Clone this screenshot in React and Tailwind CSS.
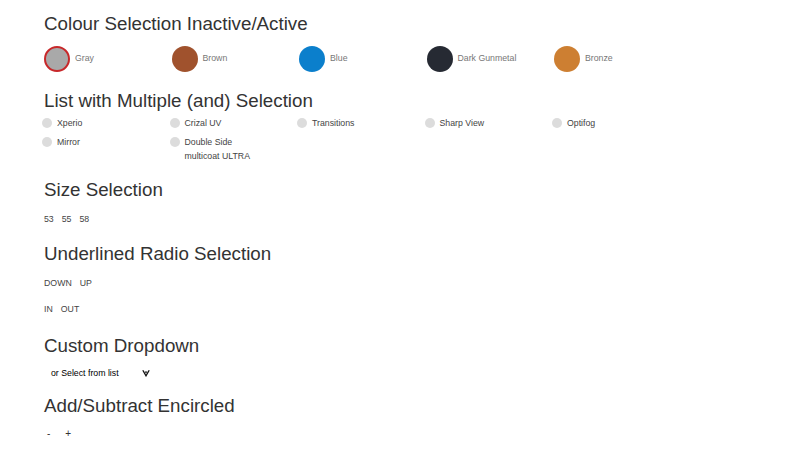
import React from 'react';

const colours = [
  { name: 'Gray', bg: 'bg-[#a9a9a9]', active: true },
  { name: 'Brown', bg: 'bg-[#a0522d]' },
  { name: 'Blue', bg: 'bg-[#0b7fcc]' },
  { name: 'Dark Gunmetal', bg: 'bg-[#262a33]' },
  { name: 'Bronze', bg: 'bg-[#cd7f32]' },
];

const options = ['Xperio', 'Crizal UV', 'Transitions', 'Sharp View', 'Optifog', 'Mirror', 'Double Side multicoat ULTRA'];

const Heading = ({ children, className = '' }) => (
  <h2 className={`text-[18.75px] leading-6 text-[#333] ${className}`}>{children}</h2>
);

const App = () => {
  return (
    <div className="min-h-[450px] bg-white pl-[44px] font-['Liberation_Sans',Arial,sans-serif]">
      <div className="pt-[12px]">
        <Heading>Colour Selection Inactive/Active</Heading>

        <div className="mt-[10px] grid grid-cols-[repeat(5,127.5px)]">
          {colours.map((c) => (
            <div key={c.name} className="flex items-center gap-[5px]">
              <span
                className={`box-border h-[26px] w-[26px] rounded-full ${c.bg} ${c.active ? 'border-2 border-[#c7282a]' : ''}`}
              />
              <span className="text-[8.75px] text-[#777]">{c.name}</span>
            </div>
          ))}
        </div>

        <Heading className="mt-[17px]">List with Multiple (and) Selection</Heading>
        <div className="-ml-[2px] mt-[3px] grid grid-cols-[repeat(5,127.5px)] gap-y-[5px]">
          {options.map((o) => (
            <div key={o} className="flex items-start gap-[5px]">
              <span className="mt-[2px] h-[10px] w-[10px] shrink-0 rounded-full bg-[#dcdcdc]" />
              <span className="max-w-[70px] text-[8.75px] leading-[14px] text-[#444]">{o}</span>
            </div>
          ))}
        </div>

        <Heading className="mt-[15px]">Size Selection</Heading>
        <div className="mt-[10px] flex gap-[8px] text-[8.75px] leading-[14px] text-[#444]">
          <span>53</span>
          <span>55</span>
          <span>58</span>
        </div>

        <Heading className="mt-[16px]">Underlined Radio Selection</Heading>
        <div className="mt-[10px] flex gap-[8px] text-[8.75px] leading-[14px] text-[#444]">
          <span>DOWN</span>
          <span>UP</span>
        </div>
        <div className="mt-[12px] flex gap-[8px] text-[8.75px] leading-[14px] text-[#444]">
          <span>IN</span>
          <span>OUT</span>
        </div>

        <Heading className="mt-[18px]">Custom Dropdown</Heading>
        <div className="mt-[8px] flex items-center pl-[7px] text-[8.75px] leading-[14px] text-black">
          <span>or Select from list</span>
          <svg className="ml-[23px]" width="8" height="8" viewBox="0 0 8 8">
            <path d="M0.8 1.2 L4 6.8 L7.2 1.2" fill="none" stroke="#111" strokeWidth="1.3" />
            <path d="M2.6 2.4 L4 4.6 L5.4 2.4 Z" fill="#111" />
          </svg>
        </div>

        <Heading className="mt-[14px]">Add/Subtract Encircled</Heading>
        <div className="mt-[9px] flex pl-[3px] text-[10px] leading-[14px] text-[#333]">
          <span>-</span>
          <span className="ml-[15px]">+</span>
        </div>
      </div>
    </div>
  );
};

export default App;
